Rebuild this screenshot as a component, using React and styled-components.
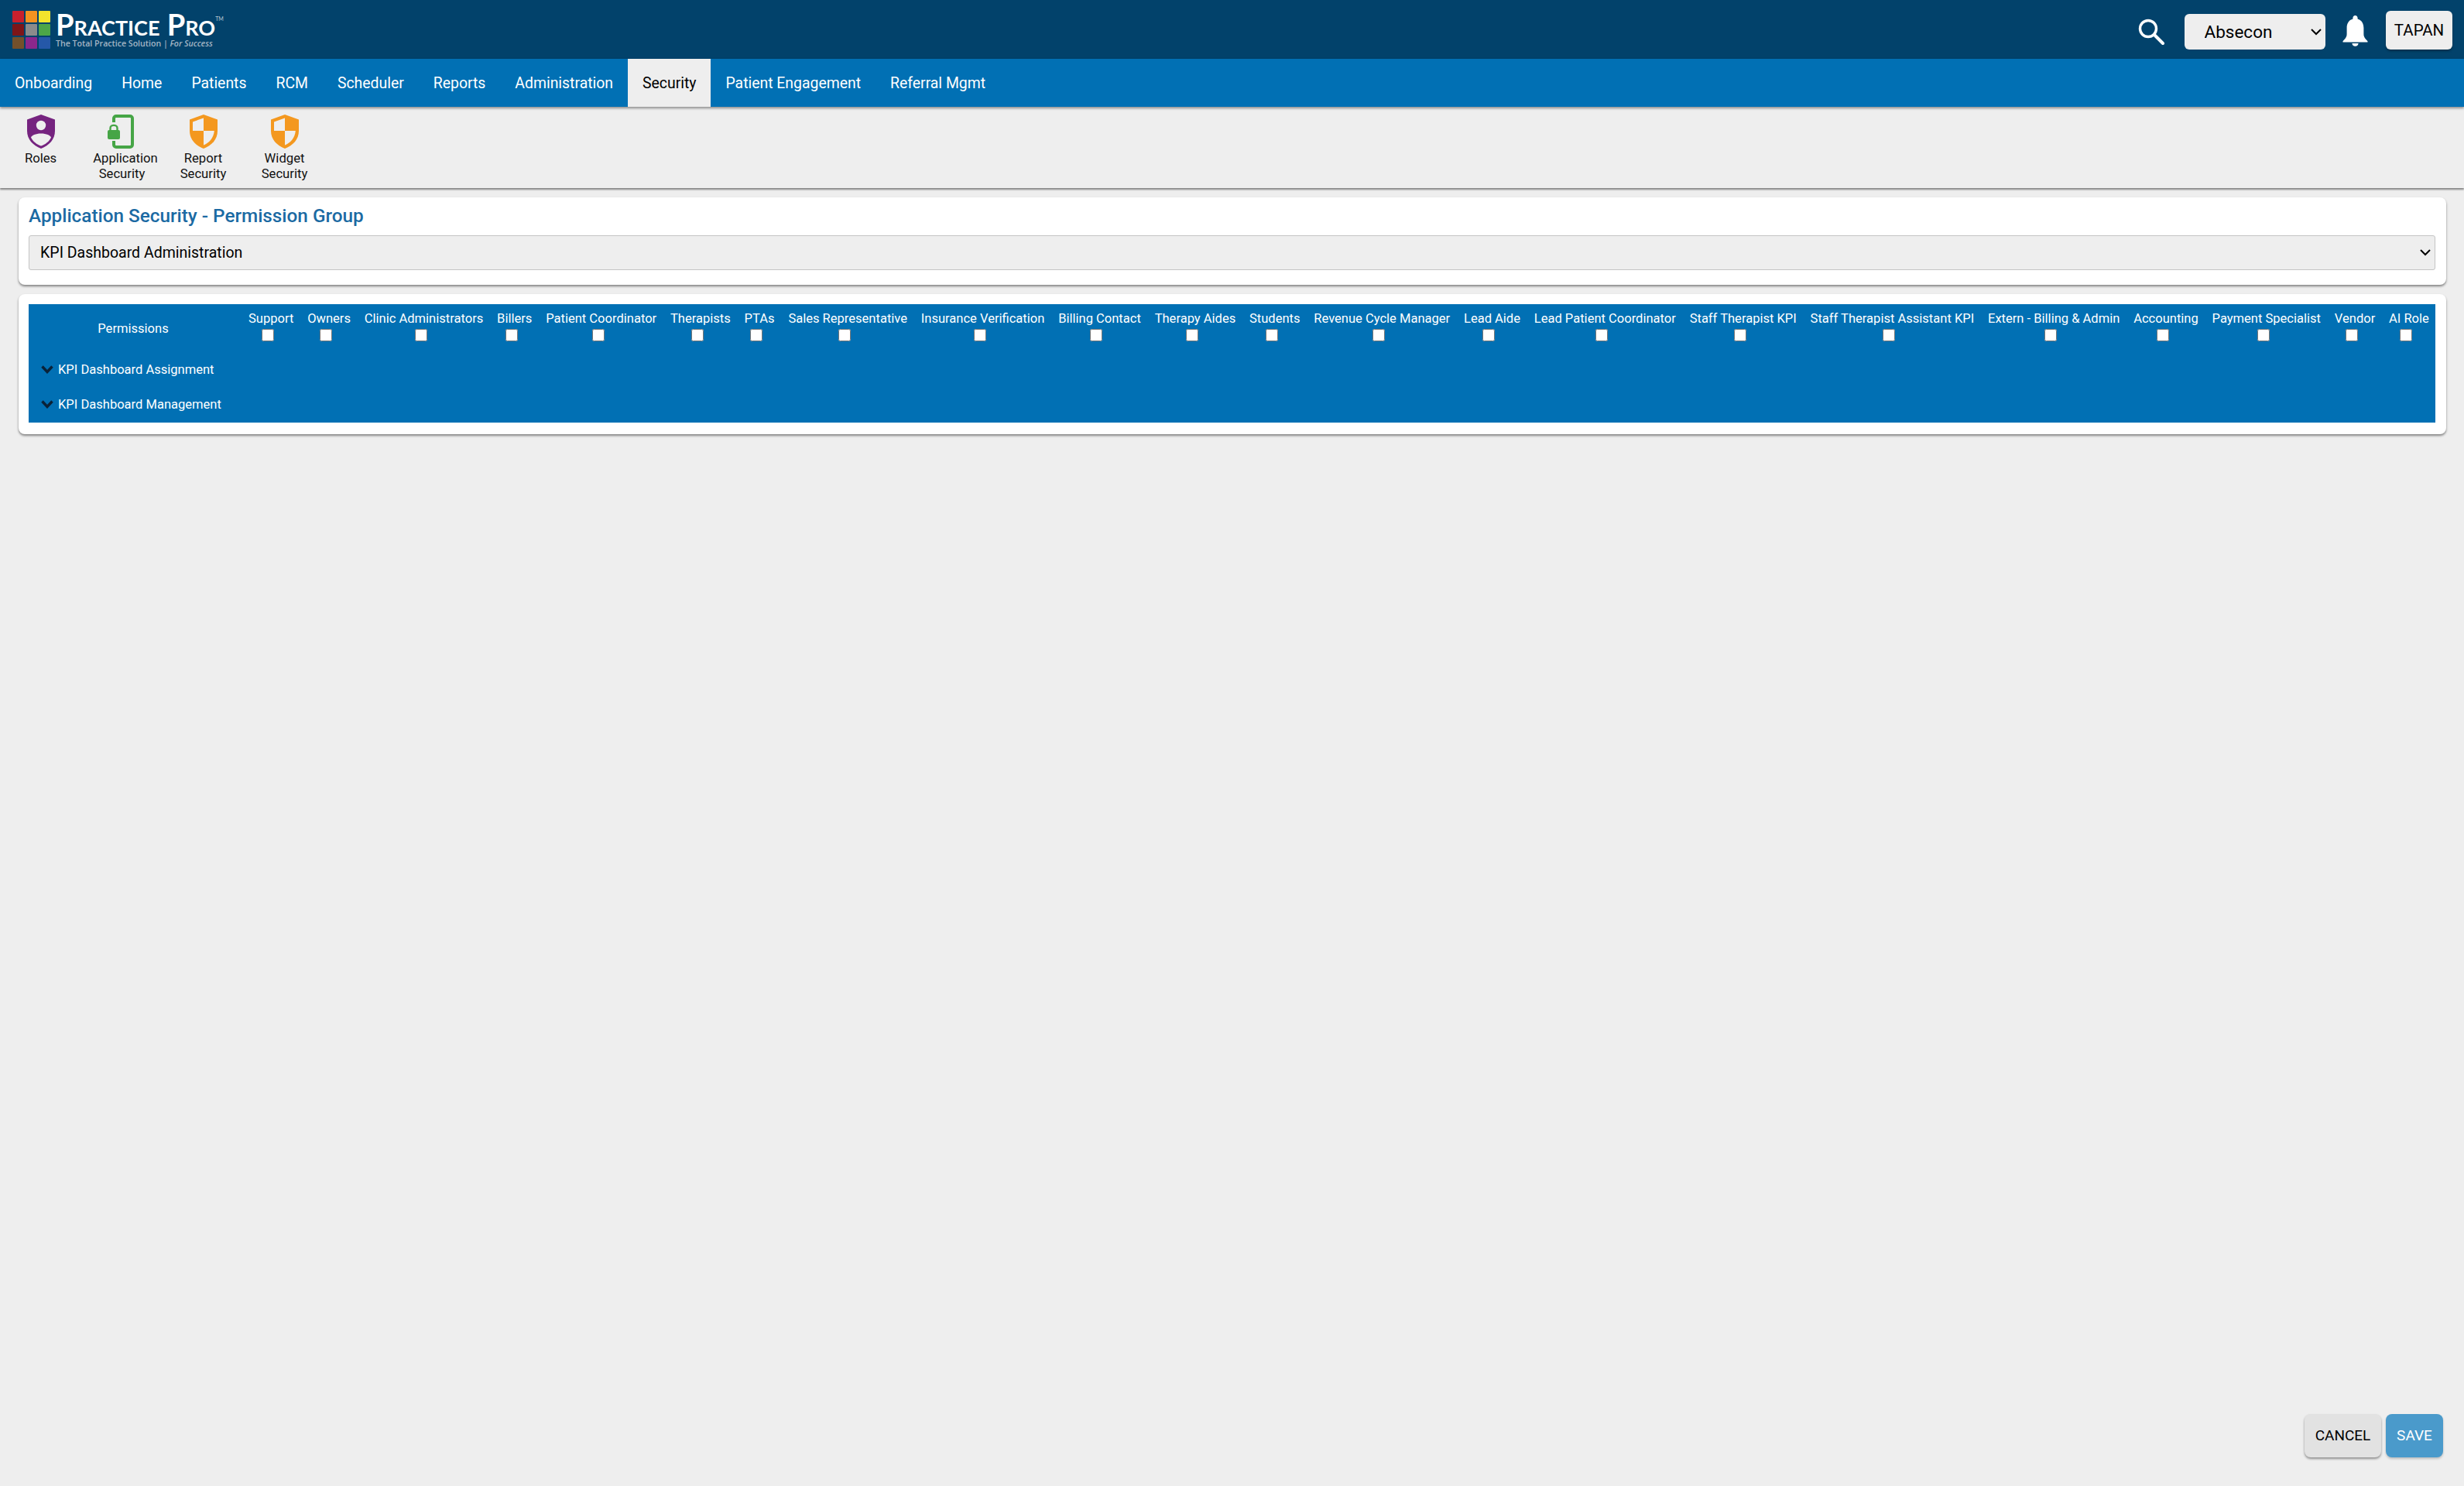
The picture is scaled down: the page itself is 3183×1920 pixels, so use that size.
import styled, { createGlobalStyle } from "styled-components";

const tabs = [
    "Onboarding",
    "Home",
    "Patients",
    "RCM",
    "Scheduler",
    "Reports",
    "Administration",
    "Security",
    "Patient Engagement",
    "Referral Mgmt",
];

const roles = [
    "Support",
    "Owners",
    "Clinic Administrators",
    "Billers",
    "Patient Coordinator",
    "Therapists",
    "PTAs",
    "Sales Representative",
    "Insurance Verification",
    "Billing Contact",
    "Therapy Aides",
    "Students",
    "Revenue Cycle Manager",
    "Lead Aide",
    "Lead Patient Coordinator",
    "Staff Therapist KPI",
    "Staff Therapist Assistant KPI",
    "Extern - Billing & Admin",
    "Accounting",
    "Payment Specialist",
    "Vendor",
    "AI Role",
];

const logoColors = [
    "#c9202d",
    "#f49320",
    "#f3e42c",
    "#7e1518",
    "#8b8b8b",
    "#4ca648",
    "#74502b",
    "#8b278c",
    "#2558a8",
];

const LogoMark = () => (
    <svg width="50" height="50" viewBox="0 0 50 50">
        {logoColors.map((color, i) => (
            <rect
                key={color}
                x={(i % 3) * 17}
                y={Math.floor(i / 3) * 17}
                width="15"
                height="15"
                rx="1"
                fill={color}
            />
        ))}
    </svg>
);

const SearchIcon = () => (
    <svg width="36" height="36" viewBox="0 0 36 36" fill="none" stroke="#fff" strokeLinecap="round">
        <circle cx="14" cy="14" r="10.5" strokeWidth="3.4" />
        <path d="M22 22 L33 33" strokeWidth="4" />
    </svg>
);

const BellIcon = () => (
    <BellBox>
        <svg width="33" height="40" viewBox="0 0 33 40" fill="#fff">
            <path d="M16.5 0 C14.6 0 13.4 1.4 13.4 3.3 L13.4 4.6 C8.2 6 5.6 10.4 5.6 16 L5.6 24 C5.6 28 3.4 30 0.5 33.2 L0.5 34.4 L32.5 34.4 L32.5 33.2 C29.6 30 27.4 28 27.4 24 L27.4 16 C27.4 10.4 24.8 6 19.6 4.6 L19.6 3.3 C19.6 1.4 18.4 0 16.5 0 Z" />
            <path d="M12.4 36 L20.6 36 C20.4 38.4 18.8 39.8 16.5 39.8 C14.2 39.8 12.6 38.4 12.4 36 Z" />
        </svg>
    </BellBox>
);

const RolesIcon = () => (
    <svg width="36" height="44" viewBox="0 0 36 44">
        <path
            fill="#75237f"
            d="M18 0 L36 6.5 L36 21 C36 32 28.5 40 18 44 C7.5 40 0 32 0 21 L0 6.5 Z"
        />
        <circle cx="18" cy="14" r="6.2" fill="#eee" />
        <path
            fill="#eee"
            d="M18 24.5 C25 24.5 30 27 31 29.5 C28.5 35 23.5 38.6 18 40.6 C12.5 38.6 7.5 35 5 29.5 C6 27 11 24.5 18 24.5 Z"
        />
    </svg>
);

const AppSecurityIcon = () => (
    <svg width="34" height="44" viewBox="0 0 34 44">
        <rect x="8" y="2" width="24" height="40" rx="3" fill="none" stroke="#46a546" strokeWidth="4" />
        <rect x="0" y="10" width="20" height="24" fill="#eee" />
        <rect x="0" y="20" width="16" height="12" rx="2" fill="#46a546" />
        <path d="M3.5 20 L3.5 17.5 C3.5 12.6 12.5 12.6 12.5 17.5 L12.5 20" fill="none" stroke="#46a546" strokeWidth="2.4" />
    </svg>
);

const ShieldIcon = () => (
    <svg width="36" height="44" viewBox="0 0 36 44">
        <path
            fill="#f4981f"
            d="M18 0 L36 6.5 L36 21 C36 32 28.5 40 18 44 C7.5 40 0 32 0 21 L0 6.5 Z"
        />
        <path fill="#eee" d="M18 4.4 L4 9.4 L4 21 L18 21 Z" />
        <path fill="#eee" d="M18 21 L31.8 21 C31 30 25.5 36.4 18 39.6 Z" />
    </svg>
);

const Chevron = () => (
    <svg width="16" height="11" viewBox="0 0 16 11" fill="none" stroke="#0a2238" strokeWidth="3.4">
        <path d="M1.5 1.5 L8 8.5 L14.5 1.5" />
    </svg>
);

const tiles = [
    { name: ["Roles"], icon: <RolesIcon /> },
    { name: ["Application", "Security"], icon: <AppSecurityIcon />, shift: -2, indent: 9 },
    { name: ["Report", "Security"], icon: <ShieldIcon /> },
    { name: ["Widget", "Security"], icon: <ShieldIcon /> },
];

const App = () => {
    return (
        <Page>
            <GlobalStyle />
            <Header>
                <Logo>
                    <LogoMark />
                    <LogoWords>
                        <LogoName>
                            Practice Pro<LogoTm>TM</LogoTm>
                        </LogoName>
                        <LogoTag>
                            The Total Practice Solution | <i>For Success</i>
                        </LogoTag>
                    </LogoWords>
                </Logo>
                <HeaderRight>
                    <SearchIcon />
                    <ClinicSelect defaultValue="Absecon">
                        <option>Absecon</option>
                    </ClinicSelect>
                    <BellIcon />
                    <UserButton>TAPAN</UserButton>
                </HeaderRight>
            </Header>
            <Nav>
                {tabs.map((tab) => (
                    <Tab key={tab} $active={tab === "Security"}>
                        {tab}
                    </Tab>
                ))}
            </Nav>
            <SubBar>
                {tiles.map((tile) => (
                    <Tile key={tile.name.join(" ")}>
                        <TileIcon $shift={tile.shift || 0}>{tile.icon}</TileIcon>
                        {tile.name.map((line, i) => (
                            <TileLine key={line} $indent={i === 0 ? tile.indent || 0 : 0}>
                                {line}
                            </TileLine>
                        ))}
                    </Tile>
                ))}
            </SubBar>
            <Content>
                <Card>
                    <Title>Application Security - Permission Group</Title>
                    <GroupSelect defaultValue="KPI Dashboard Administration">
                        <option>KPI Dashboard Administration</option>
                    </GroupSelect>
                </Card>
                <TableCard>
                    <Table>
                        <HeadRow>
                            <PermissionsHead>Permissions</PermissionsHead>
                            <RoleList>
                                {roles.map((role) => (
                                    <RoleCell key={role}>
                                        <span>{role}</span>
                                        <RoleCheck type="checkbox" />
                                    </RoleCell>
                                ))}
                            </RoleList>
                        </HeadRow>
                        <PermissionRow>
                            <Chevron />
                            KPI Dashboard Assignment
                        </PermissionRow>
                        <PermissionRow>
                            <Chevron />
                            KPI Dashboard Management
                        </PermissionRow>
                    </Table>
                </TableCard>
            </Content>
            <Footer>
                <CancelButton>CANCEL</CancelButton>
                <SaveButton>SAVE</SaveButton>
            </Footer>
        </Page>
    );
};

const GlobalStyle = createGlobalStyle`
    html, body {
        margin: 0;
        padding: 0;
        background-color: #eeeeee;
    }
    * {
        box-sizing: border-box;
    }
`;
const Page = styled.div`
    display: flex;
    flex-direction: column;
    height: 1920px;
    font-family: Roboto, "Liberation Sans", sans-serif;
    background-color: #eeeeee;
    color: #000000;
`;
const Header = styled.div`
    display: flex;
    flex-direction: row;
    justify-content: space-between;
    align-items: center;
    height: 76px;
    padding: 0 15px 0 16px;
    background-color: #02426b;
`;
const Logo = styled.div`
    display: flex;
    flex-direction: row;
    align-items: center;
    gap: 6px;
    padding-top: 2px;
`;
const LogoWords = styled.div`
    display: flex;
    flex-direction: column;
    gap: 3px;
`;
const LogoName = styled.div`
    font-family: Lato, sans-serif;
    font-variant: small-caps;
    font-weight: 700;
    font-size: 38px;
    line-height: 31px;
    white-space: nowrap;
    color: #ffffff;
`;
const LogoTm = styled.span`
    position: relative;
    top: -19px;
    font-size: 7px;
    line-height: 0;
    font-weight: 400;
    font-variant: normal;
    color: #b9c6d2;
`;
const LogoTag = styled.div`
    font-family: "Open Sans", sans-serif;
    font-size: 10.6px;
    line-height: 13px;
    font-weight: 600;
    color: #a5b6c5;
    white-space: nowrap;
`;
const HeaderRight = styled.div`
    display: flex;
    flex-direction: row;
    align-items: center;
    padding-top: 6px;
`;
const BellBox = styled.div`
    display: flex;
    margin-bottom: 3px;
`;
const ClinicSelect = styled.select`
    zoom: 1.5;
    width: 121px;
    height: 31px;
    margin: 0 15px 0 17px;
    padding-left: 13px;
    border: none;
    border-radius: 4px;
    background-color: #eeeeee;
    font-family: Roboto, sans-serif;
    font-size: 15px;
    color: #000000;
`;
const UserButton = styled.button`
    width: 86px;
    height: 50px;
    margin-left: 23px;
    margin-bottom: 4px;
    padding: 0;
    border: none;
    border-radius: 6px;
    background-color: #eeeeee;
    box-shadow: 0 2px 3px rgba(0, 0, 0, 0.3);
    font-family: Roboto, sans-serif;
    font-size: 20.5px;
    color: #000000;
`;
const Nav = styled.div`
    position: relative;
    display: flex;
    flex-direction: row;
    height: 62px;
    background-color: #0170b4;
    box-shadow: 0 2px 3px rgba(0, 0, 0, 0.4);
`;
const Tab = styled.div`
    display: flex;
    align-items: center;
    padding: 0 19px;
    font-size: 19.4px;
    color: ${(props) => (props.$active ? "#000000" : "#ffffff")};
    background-color: ${(props) => (props.$active ? "#eeeeee" : "transparent")};
`;
const SubBar = styled.div`
    display: flex;
    flex-direction: row;
    height: 105px;
    padding: 10px 0 0 0;
    background-color: #eeeeee;
    box-shadow: 0 2px 2px rgba(0, 0, 0, 0.45);
`;
const Tile = styled.div`
    display: flex;
    flex-direction: column;
    align-items: center;
    width: 105px;
    font-size: 16.67px;
    line-height: 20px;
    color: #111111;
`;
const TileIcon = styled.div`
    display: flex;
    height: 46px;
    margin-bottom: 1px;
    transform: translateX(${(props) => props.$shift}px);
`;
const TileLine = styled.div`
    padding-left: ${(props) => props.$indent}px;
    white-space: nowrap;
`;
const Content = styled.div`
    display: flex;
    flex-direction: column;
    gap: 12px;
    padding: 12px 23px 0 24px;
`;
const Card = styled.div`
    display: flex;
    flex-direction: column;
    height: 113px;
    padding: 10px 14px 0 13px;
    border-radius: 8px;
    background-color: #ffffff;
    box-shadow: 0 2px 3px rgba(0, 0, 0, 0.45);
`;
const Title = styled.div`
    height: 39px;
    font-size: 24.3px;
    line-height: 28px;
    font-weight: 500;
    color: #1b6aa3;
`;
const GroupSelect = styled.select`
    zoom: 1.5;
    width: 100%;
    height: 30px;
    padding-left: 5.4px;
    border: 1px solid #c4c4c4;
    border-radius: 2px;
    background-color: #eeeeee;
    font-family: Roboto, sans-serif;
    font-size: 13px;
    color: #000000;
`;
const TableCard = styled.div`
    height: 181px;
    padding: 13px 14px 0 13px;
    border-radius: 8px;
    background-color: #ffffff;
    box-shadow: 0 2px 3px rgba(0, 0, 0, 0.45);
`;
const Table = styled.div`
    display: flex;
    flex-direction: column;
    height: 153px;
    background-color: #0170b4;
    color: #ffffff;
    font-size: 16.55px;
    line-height: 20px;
`;
const HeadRow = styled.div`
    display: flex;
    flex-direction: row;
    height: 62px;
    padding-right: 8px;
`;
const PermissionsHead = styled.div`
    display: flex;
    flex: none;
    justify-content: center;
    align-items: center;
    width: 270px;
    padding-top: 1px;
`;
const RoleList = styled.div`
    display: flex;
    flex: 1;
    flex-direction: row;
    justify-content: space-between;
    padding: 9px 0 0 14px;
`;
const RoleCell = styled.div`
    display: flex;
    flex-direction: column;
    align-items: center;
    white-space: nowrap;
`;
const RoleCheck = styled.input`
    width: 16px;
    height: 16px;
    margin: 3px 8px 0 0;
`;
const PermissionRow = styled.div`
    display: flex;
    flex-direction: row;
    align-items: center;
    gap: 6px;
    height: 45px;
    padding-left: 16px;
    white-space: nowrap;
`;
const Footer = styled.div`
    display: flex;
    flex-direction: row;
    justify-content: flex-end;
    gap: 6px;
    margin-top: auto;
    padding: 0 27px 37px 0;
`;
const CancelButton = styled.button`
    width: 99px;
    height: 56px;
    padding: 0 0 2px 0;
    border: none;
    border-radius: 8px;
    background-color: #e2e2e2;
    box-shadow: 0 2px 3px rgba(0, 0, 0, 0.4);
    font-family: Roboto, sans-serif;
    font-size: 19px;
    color: #000000;
`;
const SaveButton = styled(CancelButton)`
    width: 74px;
    background-color: #4a9acb;
    box-shadow: 0 2px 3px rgba(0, 0, 0, 0.2);
    color: #ffffff;
`;

export default App;
